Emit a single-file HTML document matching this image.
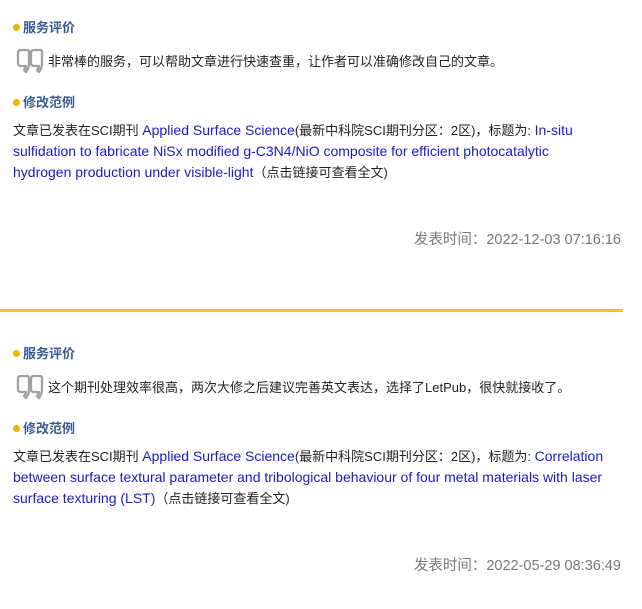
<!DOCTYPE html>
<html><head><meta charset="utf-8"><style>
body{margin:0;background:#fff;font-family:"Liberation Sans","Noto Sans CJK SC",sans-serif;width:642px;height:609px;overflow:hidden;position:relative}
.a{position:absolute;white-space:nowrap}
.h{font-size:13px;font-weight:bold;color:#3b5b8f;left:13px}
.h:before{content:"";display:inline-block;width:7px;height:7px;border-radius:50%;background:#f0b400;margin-right:3px;vertical-align:1px}
.q{left:16px}
.t{font-size:13px;color:#222;left:48px}
.p{font-size:13px;color:#222;left:13px;width:592px;line-height:21px;white-space:normal}
.p span{color:#1a1ac8;font-size:14px}
.d{font-size:14.5px;color:#777;right:21px}
.line{position:absolute;left:0;width:623px;height:3px;background:#f5c518;top:309px}
</style></head><body>
<div class="a h" style="top:17px">服务评价</div>
<svg class="a q" style="top:48px" width="29" height="26" viewBox="0 0 29 26"><g fill="none" stroke="#a0a0a0" stroke-width="2.3" stroke-linejoin="round"><path d="M5 2H11Q13 2 13 4V16Q13 20 10 24L8 22Q10 20 10 18H5Q2 18 2 15V5Q2 2 5 2Z"/><path d="M18 2H24Q26 2 26 4V16Q26 20 23 24L21 22Q23 20 23 18H18Q15 18 15 15V5Q15 2 18 2Z"/></g></svg>
<div class="a t" style="top:51px">非常棒的服务，可以帮助文章进行快速查重，让作者可以准确修改自己的文章。</div>
<div class="a h" style="top:92px">修改范例</div>
<div class="a p" style="top:120px">文章已发表在SCI期刊 <span>Applied Surface Science</span>(最新中科院SCI期刊分区：2区)，标题为: <span>In-situ sulfidation to fabricate NiSx modified g-C3N4/NiO composite for efficient photocatalytic hydrogen production under visible-light</span>（点击链接可查看全文)</div>
<div class="a d" style="top:228px">发表时间：2022-12-03 07:16:16</div>
<div class="line"></div>
<div class="a h" style="top:343px">服务评价</div>
<svg class="a q" style="top:374px" width="29" height="26" viewBox="0 0 29 26"><g fill="none" stroke="#a0a0a0" stroke-width="2.3" stroke-linejoin="round"><path d="M5 2H11Q13 2 13 4V16Q13 20 10 24L8 22Q10 20 10 18H5Q2 18 2 15V5Q2 2 5 2Z"/><path d="M18 2H24Q26 2 26 4V16Q26 20 23 24L21 22Q23 20 23 18H18Q15 18 15 15V5Q15 2 18 2Z"/></g></svg>
<div class="a t" style="top:377px">这个期刊处理效率很高，两次大修之后建议完善英文表达，选择了LetPub，很快就接收了。</div>
<div class="a h" style="top:418px">修改范例</div>
<div class="a p" style="top:446px">文章已发表在SCI期刊 <span>Applied Surface Science</span>(最新中科院SCI期刊分区：2区)，标题为: <span>Correlation between surface textural parameter and tribological behaviour of four metal materials with laser surface texturing (LST)</span>（点击链接可查看全文)</div>
<div class="a d" style="top:554px">发表时间：2022-05-29 08:36:49</div>
</body></html>
